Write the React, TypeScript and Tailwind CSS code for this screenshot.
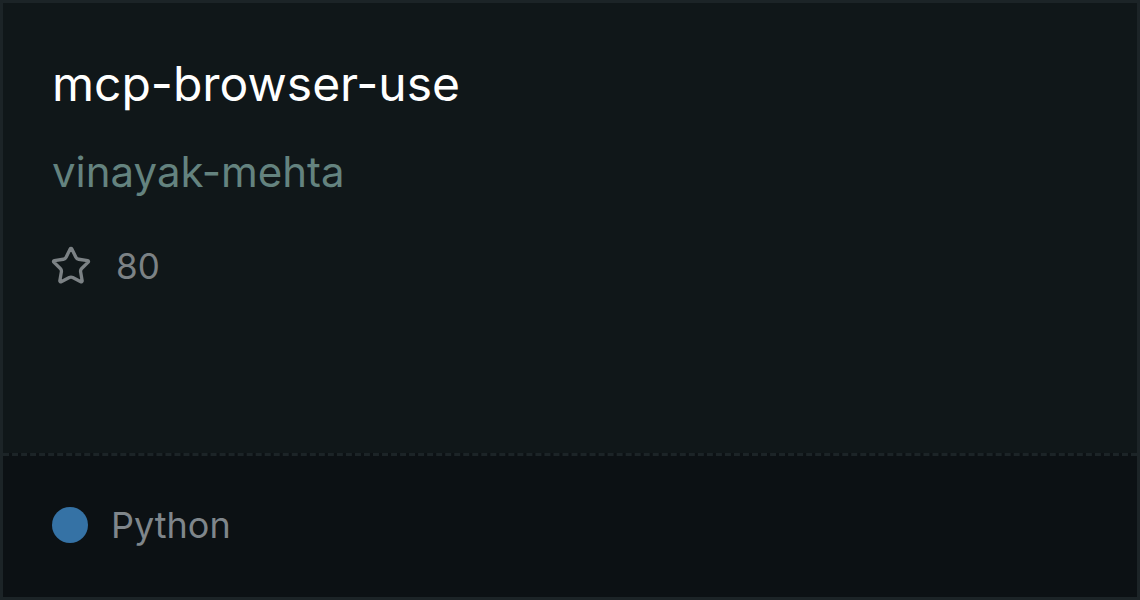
export default function App() {
  return (
    <div
      className="w-[1140px] h-[600px] flex flex-col border-[3px] border-[#1c2427] bg-[#101719]"
      style={{ fontFamily: "Inter, 'Noto Sans', sans-serif" }}
    >
      <div className="flex-1 px-[49px] pt-[52px]">
        <h1 className="text-[48px] leading-[58px] text-white font-normal">mcp-browser-use</h1>
        <p className="mt-[34px] text-[42px] leading-[50px] text-[#64837f]">vinayak-mehta</p>
        <div className="mt-[48px] flex items-center gap-[24px] text-[#7c8285]">
          {/* star outline */}
          <svg className="-ml-[2px]" width="42" height="42" viewBox="0 0 24 24" fill="none" stroke="currentColor" strokeWidth="1.9" strokeLinejoin="round" strokeLinecap="round">
            <path d="M11.525 2.295a.53.53 0 0 1 .95 0l2.31 4.679a2.123 2.123 0 0 0 1.595 1.16l5.166.756a.53.53 0 0 1 .294.904l-3.736 3.638a2.123 2.123 0 0 0-.611 1.878l.882 5.14a.53.53 0 0 1-.771.56l-4.618-2.428a2.122 2.122 0 0 0-1.973 0L6.396 21.01a.53.53 0 0 1-.77-.56l.881-5.139a2.122 2.122 0 0 0-.611-1.879L2.16 9.795a.53.53 0 0 1 .294-.906l5.165-.755a2.122 2.122 0 0 0 1.597-1.16z" />
          </svg>
          <span className="text-[35px] leading-[40px]">80</span>
        </div>
      </div>
      <div className="h-[144px] border-t-[3px] border-dashed border-[#1c2427] bg-[#0c1114] flex items-center px-[49px] pb-[3px] gap-[23px]">
        <span className="w-[36px] h-[36px] rounded-full bg-[#3572a5]" />
        <span className="text-[36px] leading-[44px] text-[#7f868b]">Python</span>
      </div>
    </div>
  );
}
